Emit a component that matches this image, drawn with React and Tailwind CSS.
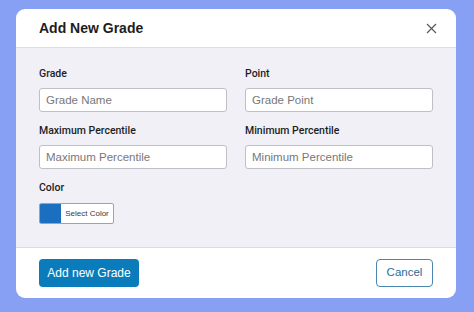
import React from "react";

const labelCls = "text-[10.5px] font-medium leading-[14px] text-[#1d1d1f] [font-family:Roboto,'Liberation_Sans',sans-serif]";

function Field({ label, placeholder }) {
    return (
        <div className="flex flex-col">
            <label className={labelCls + " mb-[7px]"}>{label}</label>
            <input
                type="text"
                placeholder={placeholder}
                className="h-[24px] w-full rounded-[3px] border border-[#bfc0c6] bg-white px-[6px] text-[11.5px] text-[#333] placeholder:text-[#77777b] outline-none"
            />
        </div>
    );
}

export default function App() {
    return (
        <div
            className="w-[474px] h-[312px] bg-[#87a0f4] pt-[9px] px-[16px]"
            style={{ fontFamily: "'Liberation Sans', Arial, sans-serif" }}
        >
            <div className="w-[440px] h-[289px] bg-white rounded-[9px] overflow-hidden flex flex-col">
                {/* header */}
                <div className="h-[39px] shrink-0 flex items-center justify-between pl-[23px] pr-[18px] border-b border-[#dcdde3]">
                    <h2 className="text-[14px] font-bold text-[#1d1d1f]">Add New Grade</h2>
                    <button className="w-[14px] h-[14px] flex items-center justify-center">
                        <svg width="11" height="11" viewBox="0 0 11 11" fill="none" stroke="#5a5a5e" strokeWidth="1.2">
                            <path d="M1 1L10 10M10 1L1 10" />
                        </svg>
                    </button>
                </div>

                {/* body */}
                <div className="flex-1 bg-[#f0f0f6] px-[23px] pt-[19px] border-b border-[#dcdde3]">
                    <div className="grid grid-cols-2 gap-x-[18px] gap-y-[12px]">
                        <Field label="Grade" placeholder="Grade Name" />
                        <Field label="Point" placeholder="Grade Point" />
                        <Field label="Maximum Percentile" placeholder="Maximum Percentile" />
                        <Field label="Minimum Percentile" placeholder="Minimum Percentile" />
                        <div className="flex flex-col">
                            <label className={labelCls + " mb-[8px]"}>Color</label>
                            <div className="flex h-[21px] w-[75px] rounded-[2px] border border-[#9aa3b5] overflow-hidden bg-white">
                                <span className="w-[21px] h-full bg-[#1b6fc0]" />
                                <span className="flex-1 flex items-center justify-center text-[8px] font-medium text-[#3a3a3e]">Select Color</span>
                            </div>
                        </div>
                    </div>
                </div>

                {/* footer */}
                <div className="h-[50px] shrink-0 flex items-center justify-between px-[23px]">
                    <button className="h-[28px] w-[100px] rounded-[4px] bg-[#0b7cbb] text-white text-[12px]">Add new Grade</button>
                    <button className="h-[28px] w-[57px] rounded-[4px] border border-[#4a86ad] text-[#2b6c96] text-[11.5px]">Cancel</button>
                </div>
            </div>
        </div>
    );
}
